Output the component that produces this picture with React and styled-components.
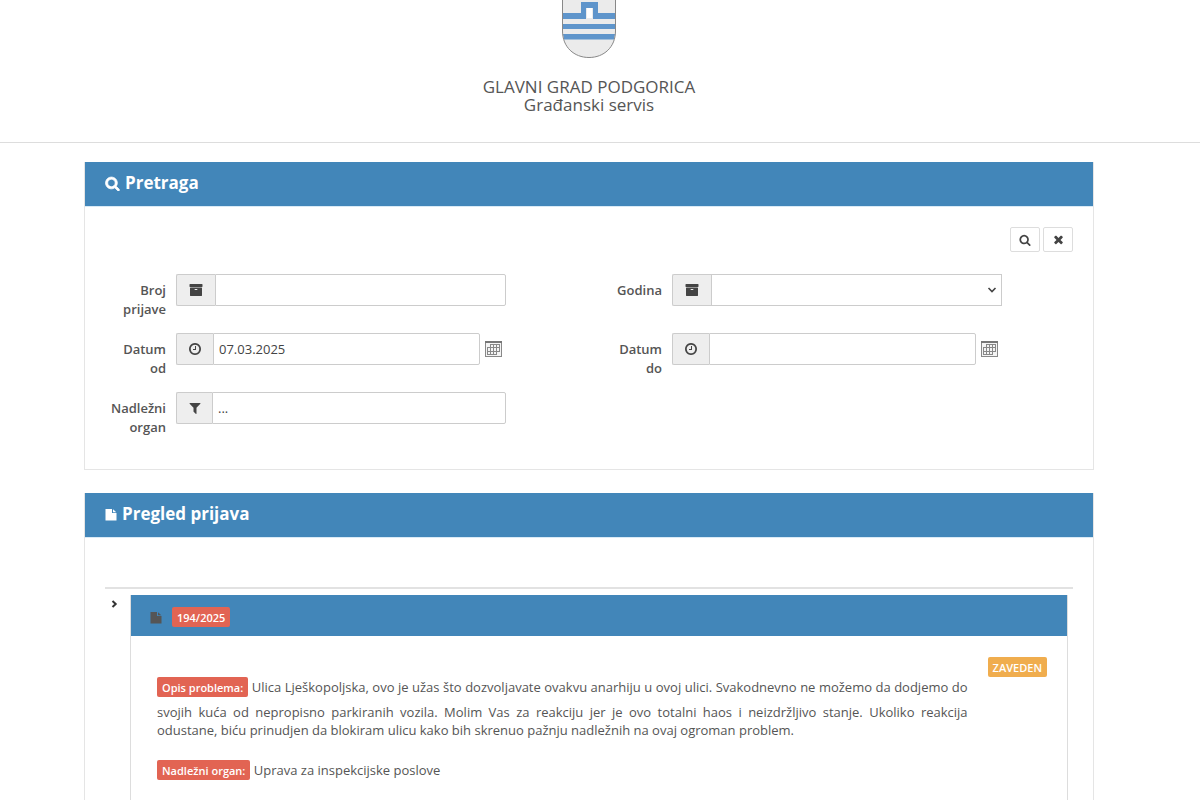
import React, { useState } from "react";
import styled, { createGlobalStyle } from "styled-components";

const GlobalStyle = createGlobalStyle`
  * {
    box-sizing: border-box;
  }
  body {
    margin: 0;
    background-color: white;
    color: #555;
    font-family: "Open Sans", "Noto Sans", sans-serif;
    font-size: 13px;
    line-height: 18px;
    overflow-x: hidden;
  }
`;

const Header = styled.header`
  display: flex;
  flex-direction: column;
  align-items: center;
  padding-right: 22px;
  padding-bottom: 28px;
  border-bottom: 1px solid #ddd;
`;

const Crest = styled.svg`
  display: block;
  width: 56px;
  height: 59px;
`;

const Title = styled.h1`
  margin: 19px 0 0;
  font-size: 17px;
  font-weight: 400;
  line-height: 18px;
  text-align: center;
`;

const Main = styled.main`
  display: flex;
  flex-direction: column;
  gap: 23px;
  padding: 19px 106px 0 84px;
`;

const Card = styled.section`
  border: 1px solid #e5e5e5;
  border-top: none;
`;

const CardHeader = styled.h2`
  display: flex;
  align-items: center;
  gap: 5px;
  height: 44px;
  margin: 0;
  padding: 0 20px 2px;
  background-color: #4286b9;
  color: white;
  font-size: 17px;
  font-weight: 700;
`;

const CardBody = styled.div`
  padding: 20px;
  border-top: 1px solid #d9eaf6;
`;

const Toolbar = styled.div`
  display: flex;
  justify-content: flex-end;
  gap: 3px;
  margin-bottom: 22px;
`;

const ToolButton = styled.button`
  display: flex;
  align-items: center;
  justify-content: center;
  width: 30px;
  height: 25px;
  padding: 0;
  border: 1px solid #ddd;
  border-radius: 2px;
  background-color: white;
  color: #444;
  cursor: pointer;
`;

const Form = styled.form`
  display: grid;
  grid-template-columns: 1fr 1fr;
  gap: 14px 24px;
  padding-bottom: 12px;
`;

const Field = styled.div`
  display: flex;
  align-items: flex-start;
  gap: 10px;
  padding-right: 71px;
`;

const Label = styled.label`
  flex: 0 0 61px;
  padding-top: 7px;
  font-weight: 600;
  line-height: 19px;
  text-align: right;
`;

const InputGroup = styled.div`
  display: flex;
  align-items: center;
  flex: 1;
  min-width: 0;
`;

const Addon = styled.span`
  display: flex;
  align-items: center;
  justify-content: center;
  flex: 0 0 ${(props) => props.$width};
  height: 32px;
  border: 1px solid #ccc;
  border-right: none;
  border-radius: 2px 0 0 2px;
  background-color: #eee;
  color: #444;
`;

const Input = styled.input`
  flex: 1;
  min-width: 0;
  height: 32px;
  padding: 0 5px;
  border: 1px solid #ccc;
  border-radius: 0 2px 2px 0;
  background-color: white;
  color: #444;
  font: inherit;
`;

const SelectWrap = styled.div`
  position: relative;
  display: flex;
  flex: 1;
  min-width: 0;
`;

const Select = styled.select`
  appearance: none;
  flex: 1;
  min-width: 0;
  height: 32px;
  padding: 0 20px 0 5px;
  border: 1px solid #ccc;
  border-radius: 0;
  background-color: white;
  color: #444;
  font: inherit;
`;

const Chevron = styled.svg`
  position: absolute;
  right: 5px;
  top: 12px;
  pointer-events: none;
`;

const CalendarButton = styled.button`
  display: flex;
  margin: 0 4px 0 5px;
  padding: 0;
  border: none;
  background: none;
  cursor: pointer;
`;

const List = styled.div`
  display: flex;
  align-items: flex-start;
  margin-top: 29px;
  padding: 6px 5px 0 0;
  border-top: 2px solid #e2e2e2;
`;

const Expander = styled.button`
  display: flex;
  justify-content: center;
  flex: 0 0 25px;
  padding: 5px 6px 0 0;
  border: none;
  background: none;
  color: #333;
  cursor: pointer;
`;

const Report = styled.article`
  flex: 1;
  min-width: 0;
  border: 1px solid #ddd;
  border-top: none;
`;

const ReportHeader = styled.h3`
  display: flex;
  align-items: center;
  gap: 10px;
  height: 41px;
  margin: 0;
  padding: 3px 19px 0;
  background-color: #4286b9;
  color: #555;
  font-size: 13px;
`;

const ReportBody = styled.div`
  display: flex;
  align-items: flex-start;
  justify-content: space-between;
  gap: 20px;
  min-height: 240px;
  padding: 21px 20px 20px 26px;
`;

const ReportText = styled.div`
  padding-top: 20px;
  text-align: justify;
`;

const Badge = styled.span`
  display: inline-block;
  flex: none;
  height: 20px;
  padding: 0 5px;
  border-radius: 2px;
  background-color: ${(props) => props.$color || "#e26453"};
  color: white;
  font-size: 11px;
  font-weight: 600;
  line-height: 21px;
`;

const Paragraph = styled.p`
  margin: 0 0 21px;

  ${Badge} {
    margin-bottom: 6px;
  }
`;

const paths = {
  search:
    "M1216 832q0-185-131.5-316.5t-316.5-131.5-316.5 131.5-131.5 316.5 131.5 316.5 316.5 131.5 316.5-131.5 131.5-316.5zm512 832q0 52-38 90t-90 38q-54 0-90-38l-343-342q-179 124-399 124-143 0-273.5-55.5t-225-150-150-225-55.5-273.5 55.5-273.5 150-225 225-150 273.5-55.5 273.5 55.5 225 150 150 225 55.5 273.5q0 220-124 399l343 343q37 37 37 90z",
  times:
    "M1490 1322q0 40-28 68l-136 136q-28 28-68 28t-68-28l-294-294-294 294q-28 28-68 28t-68-28l-136-136q-28-28-28-68t28-68l294-294-294-294q-28-28-28-68t28-68l136-136q28-28 68-28t68 28l294 294 294-294q28-28 68-28t68 28l136 136q28 28 28 68t-28 68l-294 294 294 294q28 28 28 68z",
  archive:
    "M1088 832q0-26-19-45t-45-19h-256q-26 0-45 19t-19 45 19 45 45 19h256q26 0 45-19t19-45zm576-192v960q0 26-19 45t-45 19h-1408q-26 0-45-19t-19-45v-960q0-26 19-45t45-19h1408q26 0 45 19t19 45zm64-448v256q0 26-19 45t-45 19h-1536q-26 0-45-19t-19-45v-256q0-26 19-45t45-19h1536q26 0 45 19t19 45z",
  clock:
    "M1024 544v448q0 14-9 23t-23 9h-320q-14 0-23-9t-9-23v-64q0-14 9-23t23-9h224v-352q0-14 9-23t23-9h64q14 0 23 9t9 23zm416 352q0-148-73-273t-198-198-273-73-273 73-198 198-73 273 73 273 198 198 273 73 273-73 198-198 73-273zm224 0q0 209-103 385.5t-279.5 279.5-385.5 103-385.5-103-279.5-279.5-103-385.5 103-385.5 279.5-279.5 385.5-103 385.5 103 279.5 279.5 103 385.5z",
  filter:
    "M1595 295q17 41-14 70l-493 493v742q0 42-39 59-13 5-25 5-27 0-45-19l-256-256q-19-19-19-45v-486l-493-493q-31-29-14-70 17-39 59-39h1280q42 0 59 39z",
};

const Icon = ({ name, size = 14, stroke = 0 }) => (
  <svg width={size} height={size} viewBox="0 0 1792 1792" fill="currentColor" aria-hidden="true">
    <path d={paths[name]} stroke="currentColor" strokeWidth={stroke} />
  </svg>
);

const FileIcon = () => (
  <svg width="12" height="13" viewBox="0 0 12 13" fill="currentColor" aria-hidden="true">
    <path d="M0.500 1H7V5H11.500V12.500H0.500Z" />
    <path d="M8 1.200L11.300 4.200H8Z" />
  </svg>
);

const CalendarIcon = () => (
  <svg width="17" height="16" viewBox="0 0 17 16" aria-hidden="true">
    <rect x="0.5" y="0.5" width="16" height="15" fill="#f4f4f4" stroke="#888" />
    <path d="M0 1H17" stroke="#777" strokeWidth="2" />
    <path
      d="M5.500 3V13M8.500 3V13M11.500 3V13M2.500 6V13.500M14.500 3V10.500M5 3.500H15M2 6.500H15M2 10.500H15M2 13.500H12"
      stroke="#888"
      fill="none"
    />
  </svg>
);

const DateInput = ({ id, label, value, onChange }) => (
  <Field>
    <Label htmlFor={id}>{label}</Label>
    <InputGroup>
      <Addon $width="37px">
        <Icon name="clock" />
      </Addon>
      <Input id={id} value={value} onChange={(e) => onChange(e.target.value)} />
      <CalendarButton type="button" aria-label="Kalendar">
        <CalendarIcon />
      </CalendarButton>
    </InputGroup>
  </Field>
);

const App = () => {
  const [from, setFrom] = useState("07.03.2025");
  const [to, setTo] = useState("");

  const clear = () => {
    setFrom("");
    setTo("");
  };

  return (
    <>
      <GlobalStyle />
      <Header>
        <Crest viewBox="0 0 56 59" aria-hidden="true">
          <path d="M1.500 -2V31C1.500 47 13 57.500 28 57.500S54.500 47 54.500 31V-2Z" fill="#ebebeb" />
          <path
            d="M2 13H20V2H37V13H54V19H32V8H25V19H2ZM2 24H54V29H2ZM2 34H54L53 39.500H3Z"
            fill="#5f95cb"
          />
          <path d="M26 8H31V18H26Z" fill="white" />
          <path
            d="M1.500 -2V31C1.500 47 13 57.500 28 57.500S54.500 47 54.500 31V-2"
            fill="none"
            stroke="#888"
          />
        </Crest>
        <Title>
          GLAVNI GRAD PODGORICA
          <br />
          Građanski servis
        </Title>
      </Header>
      <Main>
        <Card>
          <CardHeader>
            <Icon name="search" size={15} stroke={90} />
            Pretraga
          </CardHeader>
          <CardBody>
            <Toolbar>
              <ToolButton type="submit" form="search-form" aria-label="Pretraži">
                <Icon name="search" size={12} />
              </ToolButton>
              <ToolButton type="button" aria-label="Poništi" onClick={clear}>
                <Icon name="times" size={13} />
              </ToolButton>
            </Toolbar>
            <Form id="search-form" onSubmit={(e) => e.preventDefault()}>
              <Field>
                <Label htmlFor="number">Broj prijave</Label>
                <InputGroup>
                  <Addon $width="39px">
                    <Icon name="archive" />
                  </Addon>
                  <Input id="number" />
                </InputGroup>
              </Field>
              <Field>
                <Label htmlFor="year">Godina</Label>
                <InputGroup>
                  <Addon $width="39px">
                    <Icon name="archive" />
                  </Addon>
                  <SelectWrap>
                    <Select id="year" defaultValue="">
                      <option value=""></option>
                      <option>2025</option>
                      <option>2024</option>
                    </Select>
                    <Chevron width="10" height="8" viewBox="0 0 10 8" aria-hidden="true">
                      <path d="M1.500 2L5 5.500L8.500 2" fill="none" stroke="#444" strokeWidth="1.600" />
                    </Chevron>
                  </SelectWrap>
                </InputGroup>
              </Field>
              <DateInput id="from" label="Datum od" value={from} onChange={setFrom} />
              <DateInput id="to" label="Datum do" value={to} onChange={setTo} />
              <Field>
                <Label htmlFor="authority">Nadležni organ</Label>
                <InputGroup>
                  <Addon $width="36px">
                    <Icon name="filter" />
                  </Addon>
                  <Input id="authority" defaultValue="..." />
                </InputGroup>
              </Field>
            </Form>
          </CardBody>
        </Card>
        <Card>
          <CardHeader>
            <FileIcon />
            Pregled prijava
          </CardHeader>
          <CardBody>
            <List>
              <Expander type="button" aria-label="Prikaži">
                <svg width="7" height="8" viewBox="0 0 7 8" aria-hidden="true">
                  <path d="M1.500 1L4.700 4L1.500 7" fill="none" stroke="currentColor" strokeWidth="2" />
                </svg>
              </Expander>
              <Report>
                <ReportHeader>
                  <FileIcon />
                  <Badge>194/2025</Badge>
                </ReportHeader>
                <ReportBody>
                  <ReportText>
                    <Paragraph>
                      <Badge>Opis problema:</Badge> Ulica Lješkopoljska, ovo je užas što dozvoljavate
                      ovakvu anarhiju u ovoj ulici. Svakodnevno ne možemo da dodjemo do svojih kuća
                      od nepropisno parkiranih vozila. Molim Vas za reakciju jer je ovo totalni haos
                      i neizdržljivo stanje. Ukoliko reakcija odustane, biću prinudjen da blokiram
                      ulicu kako bih skrenuo pažnju nadležnih na ovaj ogroman problem.
                    </Paragraph>
                    <Paragraph>
                      <Badge>Nadležni organ:</Badge> Uprava za inspekcijske poslove
                    </Paragraph>
                  </ReportText>
                  <Badge $color="#f0ad4e">ZAVEDEN</Badge>
                </ReportBody>
              </Report>
            </List>
          </CardBody>
        </Card>
      </Main>
    </>
  );
};

export default App;
